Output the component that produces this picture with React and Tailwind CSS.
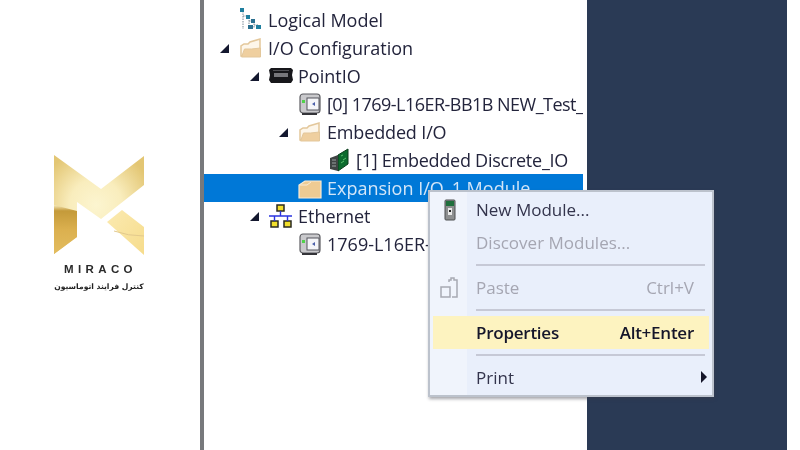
import React from "react";

const LogicalIcon = () => (
  <svg width="24" height="24" viewBox="0 0 24 24" fill="none">
    <path d="M4 3v18M4 8h6v12M10 13h5v7M15 17h4" stroke="#7b8a96" strokeWidth="1" strokeDasharray="1.5 1" />
    <rect x="1" y="0" width="4" height="4" fill="#1f7f9f" />
    <rect x="7" y="7" width="4" height="4" fill="#1f7f9f" />
    <rect x="12" y="11" width="4" height="4" fill="#2b6f8f" />
    <rect x="17" y="17" width="5" height="4" fill="#1f7f9f" />
    <rect x="9" y="17" width="5" height="4" fill="#2b6f8f" />
  </svg>
);

const FolderOpenIcon = () => (
  <svg width="24" height="24" viewBox="0 0 24 24" fill="none">
    <path d="M2 20V10l3-2h4l2-2 10-3v15z" fill="#fdf6ea" stroke="#e3c79b" strokeWidth="1.5" />
    <path d="M2.5 21l3-8h7l9-1v9z" fill="#efcf9f" stroke="#e3c79b" />
  </svg>
);

const FolderIcon = () => (
  <svg width="24" height="24" viewBox="0 0 24 24" fill="none">
    <path d="M1 22V9l6-4h16v17z" fill="#eecb93" stroke="#f9ecd6" strokeWidth="1.2" />
    <path d="M2 9h7l4-3" stroke="#f9ecd6" strokeWidth="1" />
  </svg>
);

const BackplaneIcon = () => (
  <svg width="26" height="24" viewBox="0 0 26 24" fill="none" className="shrink-0">
    <path d="M1 6l2-2h20l2 2-1 5 1 5-2 3H3l-2-3 1-5z" fill="#17171b" />
    <rect x="6" y="9" width="14" height="4" fill="#77777c" />
    <path d="M5 6.5h16" stroke="#505055" />
  </svg>
);

const ControllerIcon = () => (
  <svg width="24" height="24" viewBox="0 0 24 24" fill="none">
    <rect x="2" y="2" width="20" height="19" rx="3" fill="#c9c9cc" stroke="#5d5d62" strokeWidth="1.2" />
    <rect x="9" y="6" width="12" height="12" fill="#f4f5f8" stroke="#55555c" />
    <path d="M14 12l3-2v4z" fill="#4a5ea8" />
    <rect x="4" y="8" width="3" height="3" fill="#4fd34a" />
    <path d="M4 22h15" stroke="#333338" strokeWidth="2" />
  </svg>
);

const CardIcon = () => (
  <svg width="24" height="24" viewBox="0 0 24 24" fill="none">
    <path d="M11 7l10-6v15l-10 7z" fill="#0c6b2e" stroke="#0a3d1c" />
    <path d="M3 10l8-3v16l-8-2z" fill="#3f4444" />
    <path d="M14 8l2-1M16 12l3-2M14 15l3-2" stroke="#58c06c" />
    <path d="M5 12h4M5 15h4M5 18h4" stroke="#9aa0a0" />
  </svg>
);

const NetworkIcon = () => (
  <svg width="24" height="24" viewBox="0 0 24 24" fill="none">
    <rect x="8" y="1" width="7" height="6" fill="#f2df2b" stroke="#2a2a20" strokeWidth="1.5" />
    <rect x="2" y="17" width="7" height="6" fill="#f2df2b" stroke="#2a2a20" strokeWidth="1.5" />
    <rect x="15" y="17" width="7" height="6" fill="#f2df2b" stroke="#2a2a20" strokeWidth="1.5" />
    <path d="M0 12h23M11.5 7v5M5.5 12v5M18.5 12v5" stroke="#2b35e0" strokeWidth="1.4" />
  </svg>
);

const Expander = () => (
  <svg width="11" height="11" viewBox="0 0 11 11" className="mt-[1px]">
    <path d="M10 1v9H1z" fill="#14182f" />
  </svg>
);

const treeRows = [
  { label: "Logical Model", pad: "pl-[15px]", icon: <LogicalIcon /> },
  { label: "I/O Configuration", pad: "pl-[15px]", icon: <FolderOpenIcon />, open: true },
  { label: "PointIO", pad: "pl-[45px]", icon: <BackplaneIcon />, open: true },
  { label: "[0] 1769-L16ER-BB1B NEW_Test_", pad: "pl-[74px]", icon: <ControllerIcon />, tight: "tracking-[-0.52px]" },
  { label: "Embedded I/O", pad: "pl-[74px]", icon: <FolderOpenIcon />, open: true, tight: "tracking-[-0.15px]" },
  { label: "[1] Embedded Discrete_IO", pad: "pl-[103px]", icon: <CardIcon />, tight: "tracking-[-0.25px]" },
  { label: "Expansion I/O_1 Module", pad: "pl-[74px]", icon: <FolderIcon />, selected: true },
  { label: "Ethernet", pad: "pl-[45px]", icon: <NetworkIcon />, open: true },
  { label: "1769-L16ER-", pad: "pl-[74px]", icon: <ControllerIcon /> },
];

const TreeRow = ({ row }) => (
  <div
    className={`flex h-[28px] items-center whitespace-nowrap ${row.pad} ${
      row.selected ? "bg-[#0078d7] text-[#d3e6f8]" : "text-[#23243c]"
    }`}
  >
    <div className="flex w-[20px] shrink-0">{row.open && <Expander />}</div>
    <div className="mr-[5px] flex w-[24px] shrink-0 justify-center">{row.icon}</div>
    <span className={row.tight}>{row.label}</span>
  </div>
);

const MenuItem = ({ label, shortcut, icon, disabled, active, arrow }) => (
  <div
    className={`relative flex h-[33px] items-center pr-[15px] ${
      active
        ? "bg-[#fdf3c0] font-semibold text-[#15162a]"
        : disabled
          ? "font-medium text-[#a5a6b2]"
          : "font-medium text-[#33344c]"
    }`}
  >
    <div className="flex w-[43px] shrink-0 justify-center pr-[10px]">{icon}</div>
    <span className={`grow ${active ? "tracking-[-0.25px]" : ""}`}>{label}</span>
    {shortcut && <span className={active ? "tracking-[-0.25px]" : ""}>{shortcut}</span>}
    {arrow && (
      <svg width="8" height="12" viewBox="0 0 8 12" className="absolute right-[1px] top-[10px]">
        <path d="M1 0l6 6-6 6z" fill="#15162a" />
      </svg>
    )}
  </div>
);

const MenuSeparator = () => <div className="my-[5px] ml-[43px] mr-[4px] h-[2px] bg-[#c6c9d6]" />;

const ModuleIcon = () => (
  <svg width="12" height="22" viewBox="0 0 12 22">
    <rect x="1" y="1" width="10" height="20" rx="1" fill="#8d8f90" stroke="#4d4f50" />
    <rect x="2" y="2" width="8" height="5" fill="#1f6e3c" />
    <rect x="4" y="9" width="4" height="7" fill="#e8e8e8" />
    <rect x="5" y="11" width="2" height="2" fill="#222" />
  </svg>
);

const PasteIcon = () => (
  <svg width="20" height="22" viewBox="0 0 20 22" fill="none" stroke="#a7a9b2" strokeWidth="1.5">
    <path d="M9 5V3h2V1h3v2h3v17h-5" />
    <rect x="1" y="10" width="9" height="10" />
  </svg>
);

const Logo = () => (
  <div className="flex w-[90px] flex-col items-center">
    <svg width="90" height="100" viewBox="0 0 90 100" className="shrink-0">
      <defs>
        <radialGradient id="gold" gradientUnits="userSpaceOnUse" cx="42" cy="50" r="58">
          <stop offset="0" stopColor="#fcf5d0" />
          <stop offset="0.45" stopColor="#f9edbd" />
          <stop offset="1" stopColor="#e3c673" />
        </radialGradient>
        <linearGradient id="goldLow" x1="0" y1="0" x2="0" y2="1">
          <stop offset="0" stopColor="#f7ebbc" />
          <stop offset="0.12" stopColor="#c49a3a" />
          <stop offset="0.5" stopColor="#dbb04f" />
          <stop offset="1" stopColor="#e3bc5f" />
        </linearGradient>
        <linearGradient id="goldSmall" x1="0" y1="0" x2="1" y2="1">
          <stop offset="0" stopColor="#fbeab0" />
          <stop offset="1" stopColor="#f6dc8c" />
        </linearGradient>
      </defs>
      <path d="M0 0l47 34 43-33v29L47 64 23 47v35L0 99z" fill="url(#gold)" />
      <path d="M0 50l23 6v26L0 99z" fill="url(#goldLow)" />
      <path d="M68 55l22 17v28L53 67z" fill="url(#goldSmall)" />
      <path d="M60 76q14 5 30 5" stroke="#e2c98d" fill="none" />
    </svg>
    <div className="mt-[7px] whitespace-nowrap pl-[3px] text-[11.5px] font-bold leading-[14px] tracking-[0.38em] text-[#2a2a2a] [font-family:'Liberation_Sans',sans-serif]">
      MIRACO
    </div>
    <div
      dir="rtl"
      className="mt-[3px] whitespace-nowrap text-[7.6px] font-bold leading-[16px] text-[#222] [font-family:'DejaVu_Sans',sans-serif]"
    >
      کنترل فرایند اتوماسیون
    </div>
  </div>
);

const App = () => (
  <div className="relative flex h-[450px] w-[800px] overflow-hidden bg-white text-[18px] [font-family:'Open_Sans',sans-serif]">
    <div className="w-[200px] shrink-0 pl-[54px] pt-[155px] blur-[0.4px]">
      <Logo />
    </div>
    <div className="w-[4px] shrink-0 bg-[#77797c]" />
    <div className="w-[379px] shrink-0 overflow-hidden pt-[6px] blur-[0.4px]">
      {treeRows.map((row) => (
        <TreeRow key={row.label} row={row} />
      ))}
    </div>
    <div className="w-[4px] shrink-0" />
    <div className="w-[200px] shrink-0 bg-[#2a3a55]" />

    <div className="absolute left-[428px] top-[190px] w-[286px] border-2 border-[#bcc2cc] bg-[#e9effb] px-[3px] pb-[1px] pt-[1px] text-[17px] shadow-[1px_2px_3px_rgba(60,60,70,0.45)]">
      <div className="absolute bottom-0 left-0 top-0 w-[37px] bg-[#f0f4fc]" />
      <div className="relative blur-[0.4px]">
        <MenuItem label="New Module..." icon={<ModuleIcon />} />
        <MenuItem label="Discover Modules..." disabled />
        <MenuSeparator />
        <MenuItem label="Paste" shortcut="Ctrl+V" icon={<PasteIcon />} disabled />
        <MenuSeparator />
        <MenuItem label="Properties" shortcut="Alt+Enter" active />
        <MenuSeparator />
        <MenuItem label="Print" arrow />
      </div>
    </div>
  </div>
);

export default App;
